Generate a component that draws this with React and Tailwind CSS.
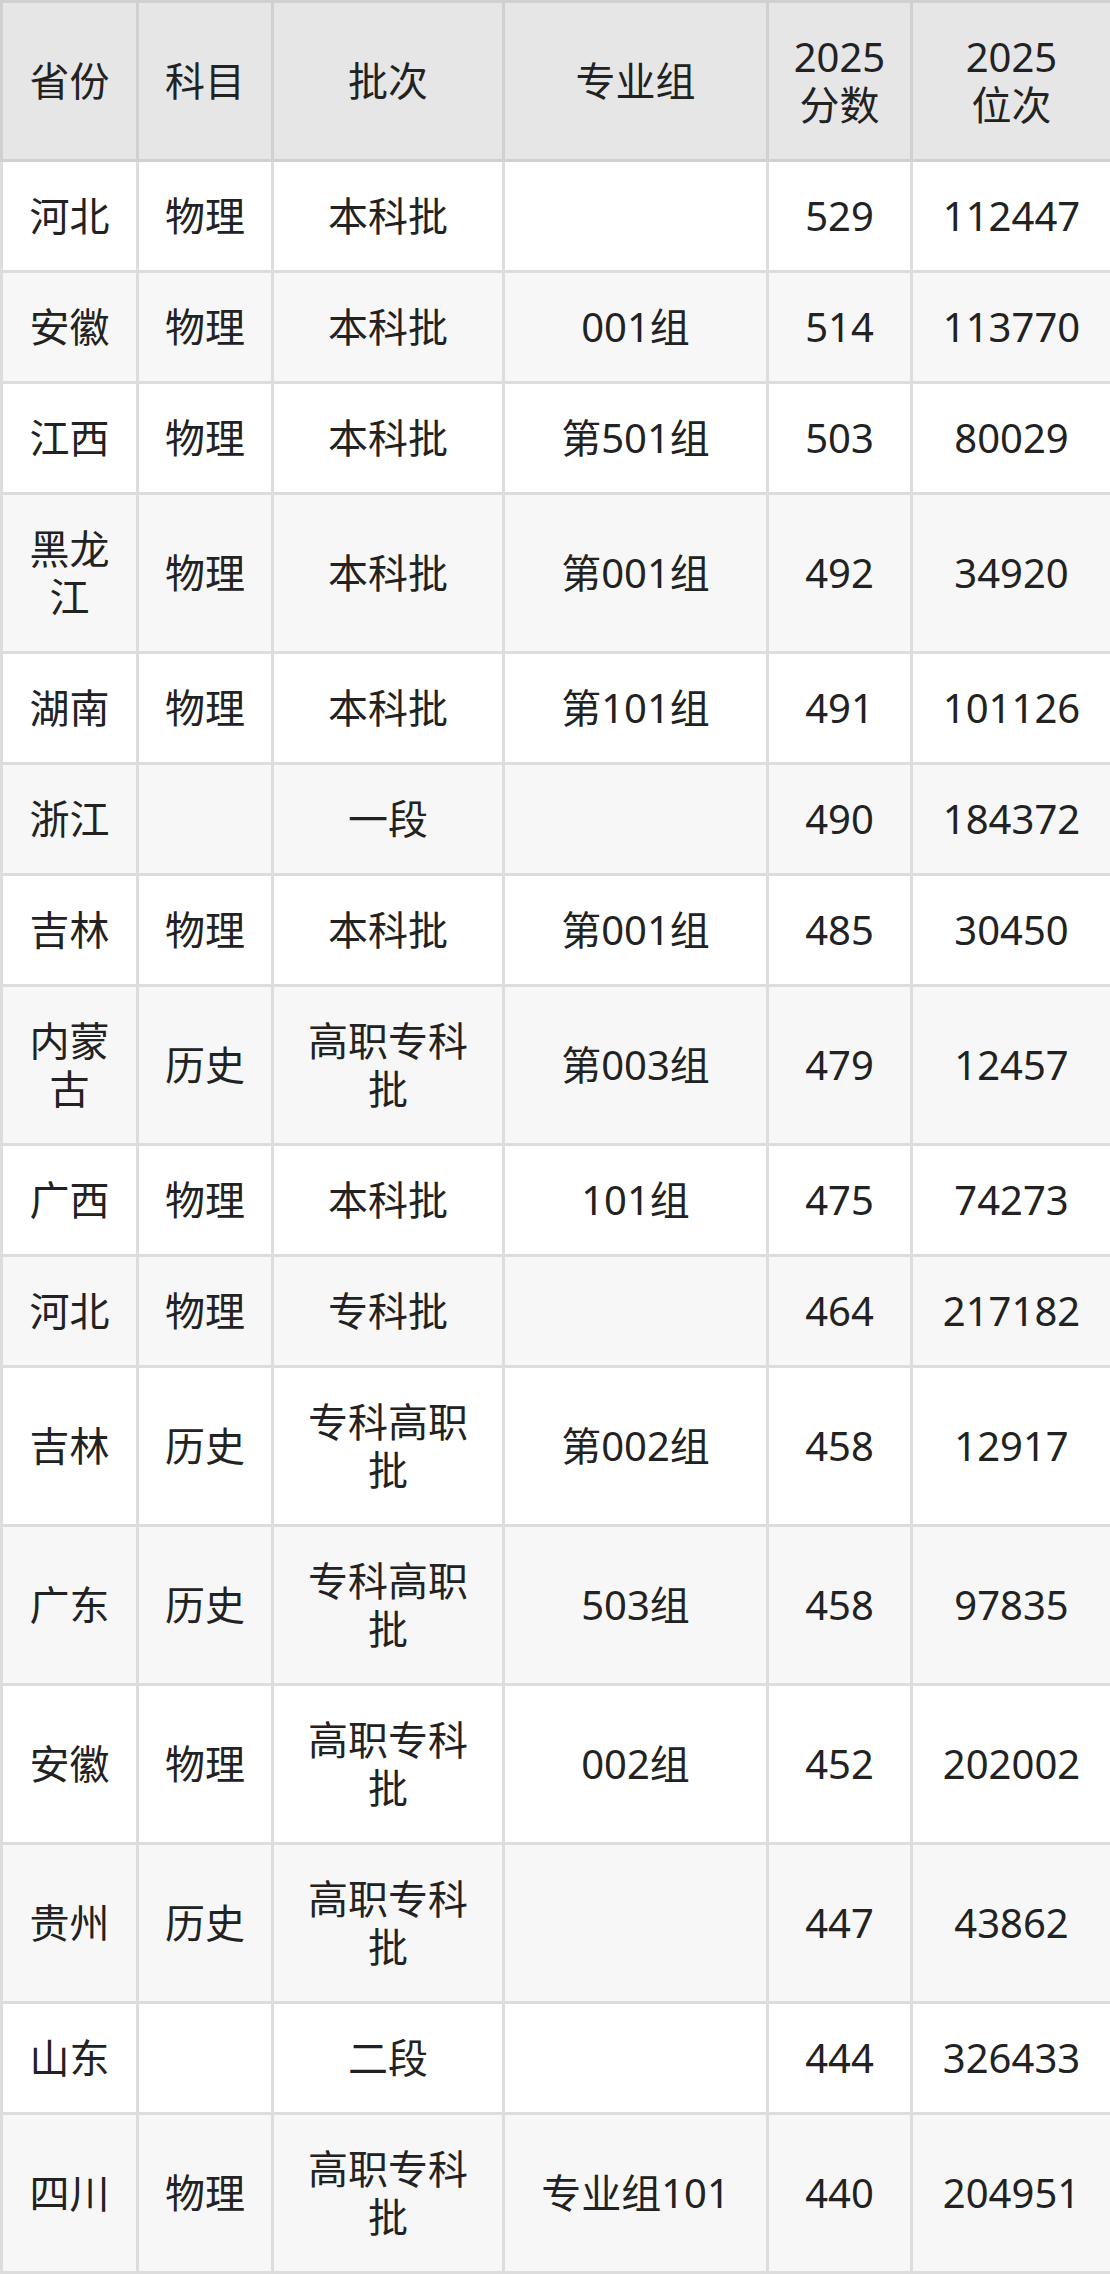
const rows = [
  ["河北", "物理", "本科批", "", "529", "112447"],
  ["安徽", "物理", "本科批", "001组", "514", "113770"],
  ["江西", "物理", "本科批", "第501组", "503", "80029"],
  ["黑龙江", "物理", "本科批", "第001组", "492", "34920"],
  ["湖南", "物理", "本科批", "第101组", "491", "101126"],
  ["浙江", "", "一段", "", "490", "184372"],
  ["吉林", "物理", "本科批", "第001组", "485", "30450"],
  ["内蒙古", "历史", "高职专科批", "第003组", "479", "12457"],
  ["广西", "物理", "本科批", "101组", "475", "74273"],
  ["河北", "物理", "专科批", "", "464", "217182"],
  ["吉林", "历史", "专科高职批", "第002组", "458", "12917"],
  ["广东", "历史", "专科高职批", "503组", "458", "97835"],
  ["安徽", "物理", "高职专科批", "002组", "452", "202002"],
  ["贵州", "历史", "高职专科批", "", "447", "43862"],
  ["山东", "", "二段", "", "444", "326433"],
  ["四川", "物理", "高职专科批", "专业组101", "440", "204951"],
];

const th = "border-[3px] border-[#d0d0d0] bg-[#e6e6e6] px-4 py-[30px] font-normal text-center align-middle";
const td = "border-[3px] border-[#dddddd] px-4 py-[30px] text-center align-middle";

export default function App() {
  return (
    <div className="w-[1110px] bg-white text-[#222222] font-['Noto_Sans','Noto_Sans_CJK_SC',sans-serif] text-[40px] leading-[48px]">
      <table className="w-full table-fixed border-collapse">
        <colgroup>
          <col className="w-[136px]" />
          <col className="w-[135px]" />
          <col className="w-[231px]" />
          <col className="w-[264px]" />
          <col className="w-[144px]" />
          <col className="w-[200px]" />
        </colgroup>
        <thead>
          <tr>
            <th className={th}>省份</th>
            <th className={th}>科目</th>
            <th className={th}>批次</th>
            <th className={th}>专业组</th>
            <th className={th}>2025<br />分数</th>
            <th className={th}>2025<br />位次</th>
          </tr>
        </thead>
        <tbody>
          {rows.map((r, i) => (
            <tr key={i} className={i % 2 === 0 ? "bg-white" : "bg-[#f7f7f7]"}>
              {r.map((c, j) => (
                <td key={j} className={td}>{c}</td>
              ))}
            </tr>
          ))}
        </tbody>
      </table>
    </div>
  );
}
